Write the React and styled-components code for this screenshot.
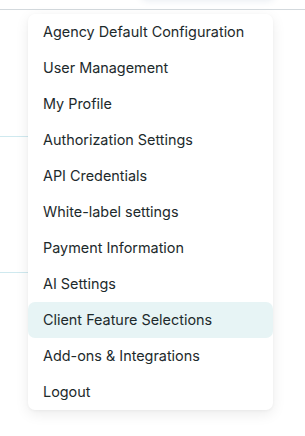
import React from "react";
import styled, { createGlobalStyle } from "styled-components";

const Global = createGlobalStyle`
  html, body { margin: 0; padding: 0; background: #ffffff; }
  body { font-family: Inter, "Noto Sans", sans-serif; overflow: hidden; }
`;

const Page = styled.div`
  width: 305px;
  height: 436px;
  position: relative;
  overflow: hidden;
  background: #fff;
`;

const TopBar = styled.div`
  height: 9px;
  border-bottom: 1px solid #d3d9dd;
  position: relative;
  display: flex;
  justify-content: flex-end;
  padding-right: 30px;
`;

const TopButton = styled.div`
  width: 135px;
  height: 30px;
  margin-top: -31px;
  border-radius: 8px;
  background: #fff;
  box-shadow: 0 2px 7px rgba(40, 80, 130, 0.1);
`;

const Body = styled.div`
  position: relative;
`;

const SideRows = styled.div`
  display: flex;
  flex-direction: column;
  width: 60px;
`;

const SideRow = styled.div`
  height: ${(p) => p.$h}px;
  border-bottom: 1px solid #cfe9ef;
`;

const Menu = styled.ul`
  position: absolute;
  left: 28px;
  top: 4px;
  width: 245px;
  margin: 0;
  padding: 0;
  list-style: none;
  background: #fff;
  border-radius: 7px;
  box-shadow: 0 4px 14px rgba(0, 0, 0, 0.08), 0 1px 3px rgba(0, 0, 0, 0.04);
  display: flex;
  flex-direction: column;
`;

const Item = styled.li`
  height: 36px;
  display: flex;
  align-items: center;
  padding-left: 15px;
  padding-bottom: 1px;
  box-sizing: border-box;
  font-size: 14.4px;
  color: #1d2a2c;
  border-radius: 7px;
  background: ${(p) => (p.$active ? "#e7f4f5" : "transparent")};
  white-space: nowrap;
`;

const items = [
  "Agency Default Configuration",
  "User Management",
  "My Profile",
  "Authorization Settings",
  "API Credentials",
  "White-label settings",
  "Payment Information",
  "AI Settings",
  "Client Feature Selections",
  "Add-ons & Integrations",
  "Logout",
];

export default function App() {
  return (
    <Page>
      <Global />
      <TopBar>
        <TopButton />
      </TopBar>
      <Body>
        <SideRows>
          <SideRow $h={126} />
          <SideRow $h={135} />
        </SideRows>
        <Menu>
          {items.map((t) => (
            <Item key={t} $active={t === "Client Feature Selections"}>
              {t}
            </Item>
          ))}
        </Menu>
      </Body>
    </Page>
  );
}
